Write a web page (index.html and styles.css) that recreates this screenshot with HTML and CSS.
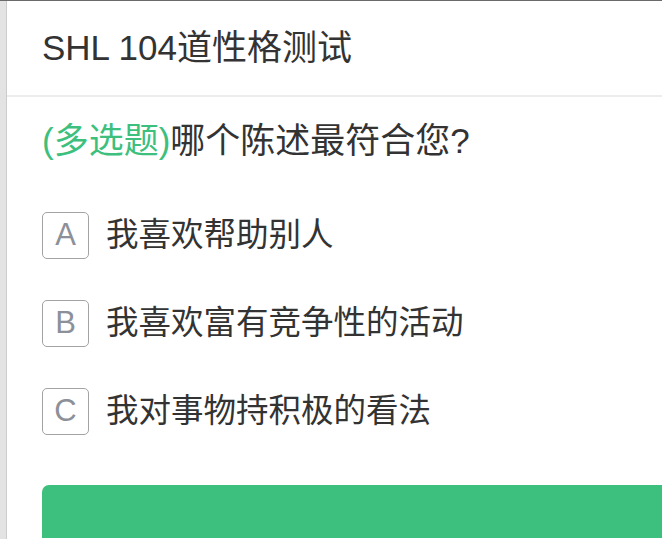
FILE: index.html
```html
<!DOCTYPE html>
<html lang="zh-CN">
<head>
<meta charset="utf-8">
<title>SHL 104道性格测试</title>
<link rel="stylesheet" href="styles.css">
</head>
<body>
<div class="frame">
  <div class="rail"></div>
  <div class="main">
    <header class="header">
      <h1 class="title">SHL 104道性格测试</h1>
    </header>
    <section class="quiz">
      <p class="question"><span class="tag">(多选题)</span>哪个陈述最符合您?</p>
      <ul class="options">
        <li class="option"><span class="letter">A</span><span class="label">我喜欢帮助别人</span></li>
        <li class="option"><span class="letter">B</span><span class="label">我喜欢富有竞争性的活动</span></li>
        <li class="option"><span class="letter">C</span><span class="label">我对事物持积极的看法</span></li>
      </ul>
      <button class="submit" type="button"></button>
    </section>
  </div>
</div>
</body>
</html>
```
FILE: styles.css
```css
html, body {
  margin: 0;
  padding: 0;
  background: #ffffff;
  overflow: hidden;
  height: 539px;
}
body {
  font-family: "Liberation Sans", "Noto Sans CJK SC", sans-serif;
  color: #333333;
}
.frame {
  display: flex;
  border-top: 1px solid #6a6a6a;
  height: 538px;
}
.rail {
  width: 6px;
  flex: none;
  background: #e3e3e3;
  border-right: 1px solid #cccccc;
}
.main {
  flex: 1;
  min-width: 0;
}
.header {
  height: 94px;
  border-bottom: 2px solid #ececec;
  display: flex;
  align-items: center;
  padding-left: 35px;
}
.title {
  margin: 0;
  font-size: 35px;
  font-weight: normal;
  line-height: 44px;
  color: #333333;
}
.quiz {
  padding-left: 35px;
}
.question {
  margin: 22px 0 0 0;
  font-size: 35px;
  line-height: 44px;
  color: #333333;
}
.tag {
  color: #3dbf7e;
}
.options {
  list-style: none;
  margin: 28px 0 0 0;
  padding: 0;
}
.option {
  height: 88px;
  display: flex;
  align-items: center;
  gap: 17px;
}
.letter {
  width: 45px;
  height: 45px;
  border: 1px solid #a3a3a3;
  border-radius: 5px;
  display: flex;
  align-items: center;
  justify-content: center;
  font-size: 31px;
  color: #8c9099;
  flex: none;
}
.label {
  font-size: 32.5px;
  line-height: 44px;
  color: #333333;
}
.submit {
  display: block;
  margin-top: 30px;
  width: 100%;
  height: 53px;
  border: none;
  border-radius: 7px 0 0 0;
  background: #3dbf7e;
}
```
